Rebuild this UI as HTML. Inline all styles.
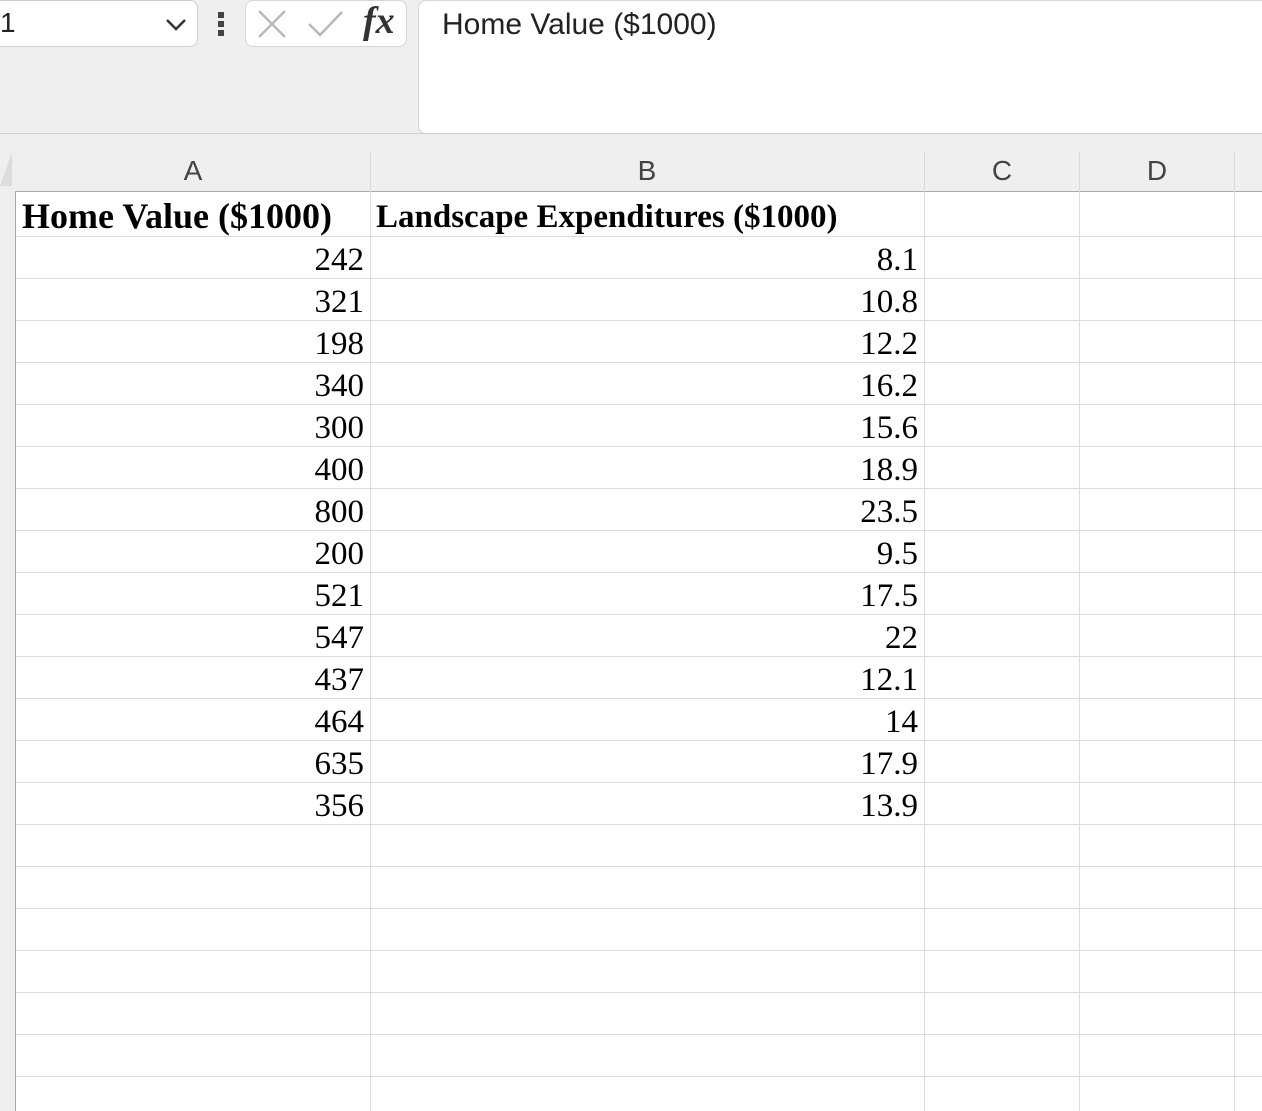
<!DOCTYPE html>
<html><head><style>
body{margin:0;width:1262px;height:1111px;background:#efefef;position:relative;overflow:hidden;font-family:"Liberation Sans",sans-serif}
.a{position:absolute}
.grid{position:absolute;left:15px;top:191px;width:1247px;height:920px;background:#fff;border-left:1.5px solid #a8a8a8;border-top:1.5px solid #a8a8a8;box-sizing:border-box}
.h{position:absolute;left:16px;width:1246px;height:1px;background:#dcdcdc}
.v{position:absolute;top:191px;height:920px;width:1px;background:#dcdcdc}
.vh{position:absolute;top:152px;height:39px;width:1px;background:#dadada}
.c{position:absolute;font-family:"Liberation Serif",serif;font-size:33px;color:#000;line-height:42px;height:42px}
.r1{text-align:right;width:200px;left:164px}
.r2{text-align:right;width:200px;left:718px}
.col{position:absolute;top:155px;font-size:28px;color:#444;width:40px;text-align:center}
</style></head><body>
<div class="a" style="left:-10px;top:0;width:208px;height:47px;background:#fff;border:1px solid #d0d0d0;border-radius:8px;box-sizing:border-box"></div>
<div class="a" style="left:0;top:7px;font-size:28px;color:#222">1</div>
<svg class="a" style="left:164px;top:14px" width="26" height="20"><path d="M3 6 L12 15 L21 6" stroke="#333" stroke-width="2.5" fill="none"/></svg>
<div class="a" style="left:218px;top:12px;width:6px;height:6px;background:#444"></div>
<div class="a" style="left:218px;top:21px;width:6px;height:6px;background:#444"></div>
<div class="a" style="left:218px;top:30px;width:6px;height:6px;background:#444"></div>
<div class="a" style="left:245px;top:0;width:162px;height:47px;background:#fff;border:1px solid #d6d6d6;border-radius:8px;box-sizing:border-box"></div>
<svg class="a" style="left:256px;top:8px" width="34" height="32"><path d="M3 3 L29 29 M29 3 L3 29" stroke="#b8b8b8" stroke-width="2.5" fill="none"/></svg>
<svg class="a" style="left:306px;top:8px" width="40" height="32"><path d="M3 16 L14 27 L36 4" stroke="#b8b8b8" stroke-width="2.5" fill="none"/></svg>
<div class="a" style="left:363px;top:-1px;font-family:'Liberation Serif',serif;font-style:italic;font-weight:bold;font-size:38px;color:#333">fx</div>
<div class="a" style="left:418px;top:0;width:860px;height:134px;background:#fff;border:1px solid #d6d6d6;border-radius:8px;box-sizing:border-box"></div>
<div class="a" style="left:442px;top:8px;font-size:30px;color:#222">Home Value ($1000)</div>
<div class="a" style="left:0;top:133px;width:1262px;height:1px;background:#d0d0d0"></div>
<div class="a" style="left:0;top:152px;width:0;height:0;border-left:12px solid transparent;border-bottom:34px solid #dcdcdc"></div>
<div class="vh" style="left:370px"></div><div class="vh" style="left:924px"></div><div class="vh" style="left:1079px"></div><div class="vh" style="left:1234px"></div>
<div class="col" style="left:173px">A</div><div class="col" style="left:627px">B</div><div class="col" style="left:982px">C</div><div class="col" style="left:1137px">D</div>
<div class="grid"></div>
<div class="v" style="left:370px"></div><div class="v" style="left:924px"></div><div class="v" style="left:1079px"></div><div class="v" style="left:1234px"></div>
<div class="h" style="top:236px"></div><div class="h" style="top:278px"></div><div class="h" style="top:320px"></div><div class="h" style="top:362px"></div><div class="h" style="top:404px"></div><div class="h" style="top:446px"></div><div class="h" style="top:488px"></div><div class="h" style="top:530px"></div><div class="h" style="top:572px"></div><div class="h" style="top:614px"></div><div class="h" style="top:656px"></div><div class="h" style="top:698px"></div><div class="h" style="top:740px"></div><div class="h" style="top:782px"></div><div class="h" style="top:824px"></div><div class="h" style="top:866px"></div><div class="h" style="top:908px"></div><div class="h" style="top:950px"></div><div class="h" style="top:992px"></div><div class="h" style="top:1034px"></div><div class="h" style="top:1076px"></div>
<div class="c" style="left:22px;top:195px;font-weight:bold;font-size:36px">Home Value ($1000)</div>
<div class="c" style="left:376px;top:196px;font-weight:bold;font-size:33px">Landscape Expenditures ($1000)</div>
<div class="c r1" style="top:239px">242</div><div class="c r2" style="top:239px">8.1</div>
<div class="c r1" style="top:281px">321</div><div class="c r2" style="top:281px">10.8</div>
<div class="c r1" style="top:323px">198</div><div class="c r2" style="top:323px">12.2</div>
<div class="c r1" style="top:365px">340</div><div class="c r2" style="top:365px">16.2</div>
<div class="c r1" style="top:407px">300</div><div class="c r2" style="top:407px">15.6</div>
<div class="c r1" style="top:449px">400</div><div class="c r2" style="top:449px">18.9</div>
<div class="c r1" style="top:491px">800</div><div class="c r2" style="top:491px">23.5</div>
<div class="c r1" style="top:533px">200</div><div class="c r2" style="top:533px">9.5</div>
<div class="c r1" style="top:575px">521</div><div class="c r2" style="top:575px">17.5</div>
<div class="c r1" style="top:617px">547</div><div class="c r2" style="top:617px">22</div>
<div class="c r1" style="top:659px">437</div><div class="c r2" style="top:659px">12.1</div>
<div class="c r1" style="top:701px">464</div><div class="c r2" style="top:701px">14</div>
<div class="c r1" style="top:743px">635</div><div class="c r2" style="top:743px">17.9</div>
<div class="c r1" style="top:785px">356</div><div class="c r2" style="top:785px">13.9</div>
</body></html>
